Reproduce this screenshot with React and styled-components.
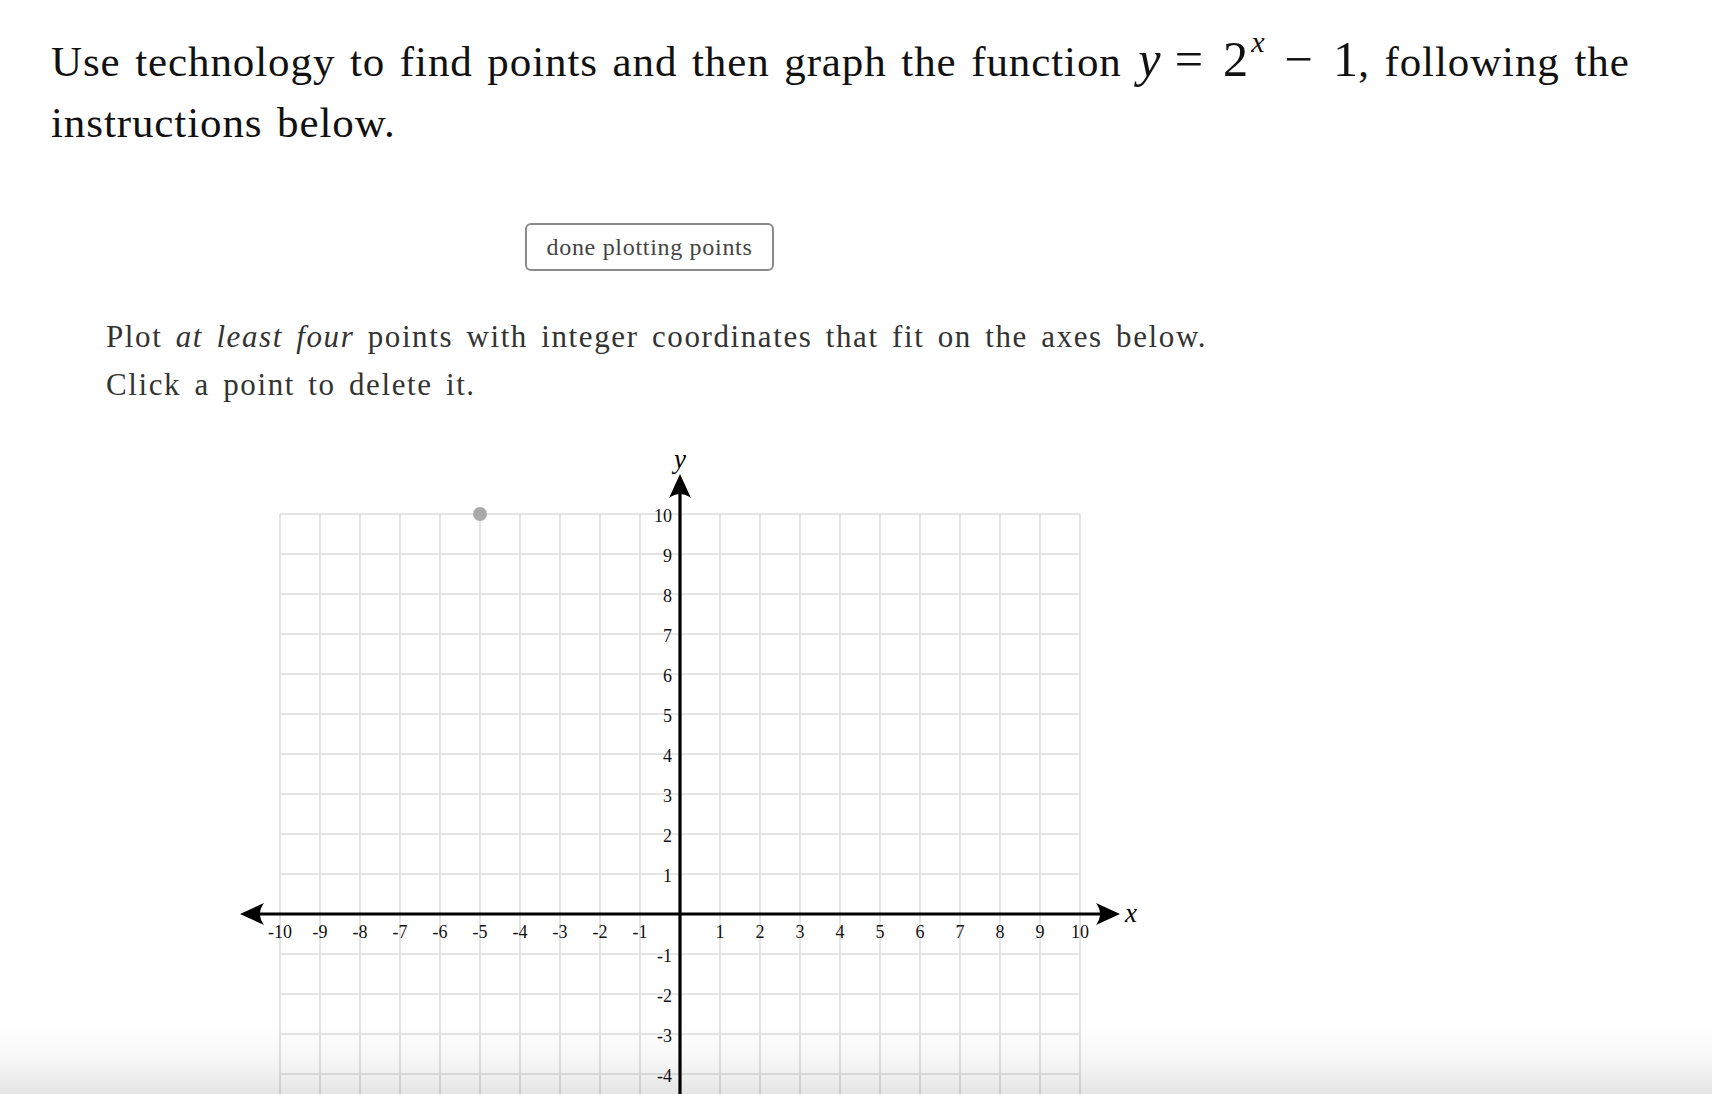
import React from "react";
import styled, { createGlobalStyle } from "styled-components";

const Global = createGlobalStyle`
  html, body { margin: 0; padding: 0; background: #fff; }
  body { font-family: "Liberation Serif", "Times New Roman", serif; overflow: hidden; }
`;

const Page = styled.main`
  padding: 31px 51px 0 51px;
  display: flex;
  flex-direction: column;
`;

const Heading = styled.p`
  margin: 0;
  font-size: 43px;
  line-height: 61px;
  letter-spacing: 0.9px;
  word-spacing: 3px;
  color: #111;
`;

const Math = styled.span`
  font-family: "Liberation Serif", serif;
  font-size: 1.17em;
  line-height: 0;
  letter-spacing: 0;
  word-spacing: 0;
  white-space: nowrap;
  margin-left: 2px;
`;

const Var = styled.i`
  font-style: italic;
`;

const Num = styled.span`
  margin-left: ${(p) => p.$lead || 0}px;
`;

const Op = styled.span`
  margin: 0 ${(p) => p.$space || 10}px;
`;

const Sup = styled.sup`
  font-size: 0.6em;
  font-style: italic;
  line-height: 0;
  vertical-align: 0;
  position: relative;
  top: -0.78em;
  margin-left: 3px;
`;

const ButtonRow = styled.div`
  margin-top: 70px;
  padding-left: 474px;
  display: flex;
`;

const Button = styled.button`
  box-sizing: border-box;
  width: 249px;
  height: 48px;
  border: 2px solid #8a8a8a;
  border-radius: 6px;
  background: #fff;
  color: #444;
  font-family: "Liberation Serif", serif;
  font-size: 24px;
  letter-spacing: 0.7px;
  padding: 0;
  cursor: pointer;
`;

const Instructions = styled.p`
  margin: 42px 0 0 55px;
  font-size: 31px;
  line-height: 48px;
  letter-spacing: 1.6px;
  word-spacing: 4px;
  color: #333;
`;

const GraphWrap = styled.div`
  margin: 32px 0 0 169px;
  display: flex;
`;

const Fade = styled.div`
  position: fixed;
  left: 0;
  right: 0;
  bottom: 0;
  height: 70px;
  pointer-events: none;
  background: linear-gradient(to bottom, rgba(0,0,0,0) 0%, rgba(0,0,0,0.035) 55%, rgba(0,0,0,0.1) 100%);
`;

const U = 40;
const OX = 460;
const OY = 473;

function Arrow({ x, y, angle }) {
  return (
    <path
      d="M0,0 L-24,-11 Q-16,0 -24,11 Z"
      fill="#000"
      transform={`translate(${x},${y}) rotate(${angle})`}
    />
  );
}

function Graph() {
  const ticks = [];
  for (let i = -10; i <= 10; i++) ticks.push(i);
  const labelFont = { fontFamily: "'Liberation Serif', serif", fontSize: 18, fill: "#111" };
  const axisLabel = { fontFamily: "'Liberation Serif', serif", fontStyle: "italic", fontSize: 27, fill: "#000" };
  return (
    <svg width="940" height="900" viewBox="0 0 940 900">
      <g stroke="#dddddd" strokeWidth="1.6">
        {ticks.map((i) => (
          <line key={"v" + i} x1={OX + i * U} y1={OY - 10 * U} x2={OX + i * U} y2={OY + 10 * U} />
        ))}
        {ticks.map((i) => (
          <line key={"h" + i} x1={OX - 10 * U} y1={OY - i * U} x2={OX + 10 * U} y2={OY - i * U} />
        ))}
      </g>
      <g stroke="#000" strokeWidth="3.2">
        <line x1={OX - 11 * U + 10} y1={OY} x2={OX + 11 * U - 10} y2={OY} />
        <line x1={OX} y1={OY - 11 * U + 10} x2={OX} y2={OY + 11 * U} />
      </g>
      <Arrow x={OX + 11 * U} y={OY} angle={0} />
      <Arrow x={OX - 11 * U} y={OY} angle={180} />
      <Arrow x={OX} y={OY - 11 * U} angle={-90} />
      {ticks
        .filter((i) => i !== 0)
        .map((i) => (
          <text key={"xl" + i} x={OX + i * U} y={OY + 24} textAnchor="middle" style={labelFont}>
            {i}
          </text>
        ))}
      {ticks
        .filter((i) => i !== 0)
        .map((i) => (
          <text key={"yl" + i} x={OX - 8} y={OY - i * U + 8} textAnchor="end" style={labelFont}>
            {i}
          </text>
        ))}
      <text x={OX + 11 * U + 5} y={OY + 8} style={axisLabel}>
        x
      </text>
      <text x={OX} y={OY - 11 * U - 6} textAnchor="middle" style={axisLabel}>
        y
      </text>
      <circle cx={OX - 5 * U} cy={OY - 10 * U} r="7" fill="#aaaaaa" />
    </svg>
  );
}

export default function App() {
  return (
    <>
      <Global />
      <Page>
        <Heading>
          Use technology to find points and then graph the function{" "}
          <Math>
            <Var>y</Var>
            <Op $space={14}>=</Op>
            <Num $lead={6}>2</Num>
            <Sup>x</Sup>
            <Op $space={20}>−</Op>
            <Num>1</Num>
          </Math>
          , following the instructions below.
        </Heading>
        <ButtonRow>
          <Button type="button">done plotting points</Button>
        </ButtonRow>
        <Instructions>
          Plot <i>at least four</i> points with integer coordinates that fit on the axes below.
          <br />
          Click a point to delete it.
        </Instructions>
        <GraphWrap>
          <Graph />
        </GraphWrap>
      </Page>
      <Fade />
    </>
  );
}
